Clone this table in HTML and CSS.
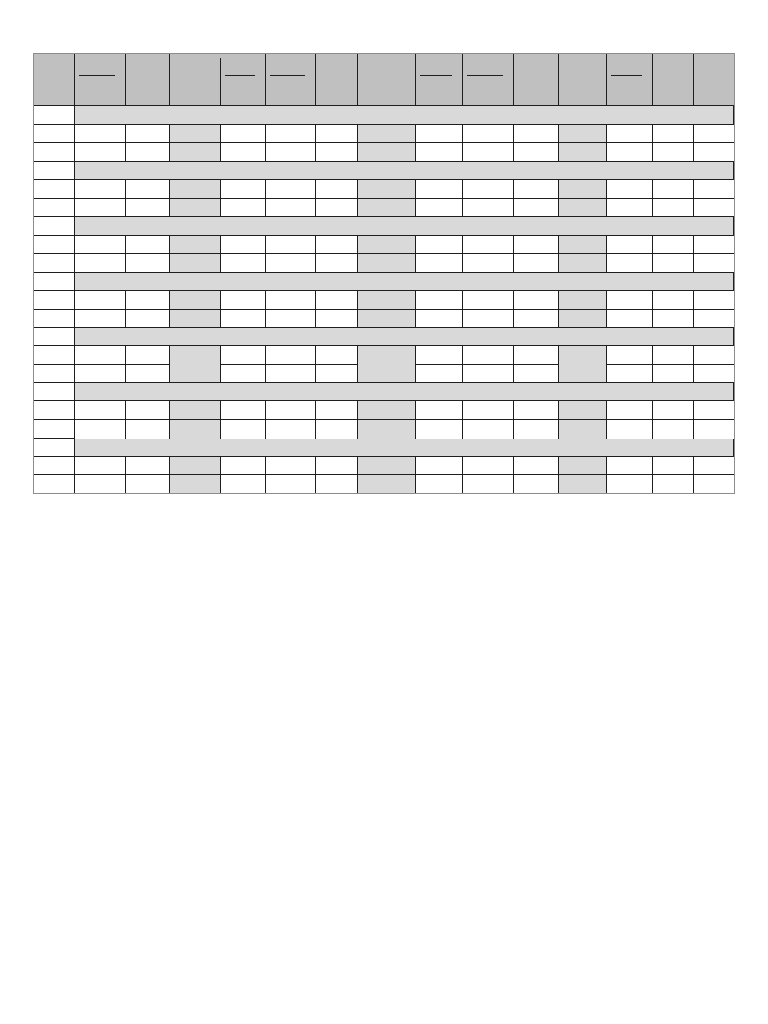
FILE: index.html
```html
<!DOCTYPE html>
<html lang="en">
<head>
<meta charset="utf-8">
<title>Sheet</title>
<link rel="stylesheet" href="styles.css">
</head>
<body>
<div class="page">
  <div class="sheet">
    <!-- header -->
    <div class="c hd"></div>
    <div class="c hd"><div class="dash"></div></div>
    <div class="c hd"></div>
    <div class="c hd partial"></div>
    <div class="c hd"><div class="dash"></div></div>
    <div class="c hd"><div class="dash"></div></div>
    <div class="c hd"></div>
    <div class="c hd"></div>
    <div class="c hd"><div class="dash"></div></div>
    <div class="c hd"><div class="dash"></div></div>
    <div class="c hd"></div>
    <div class="c hd"></div>
    <div class="c hd"><div class="dash"></div></div>
    <div class="c hd"></div>
    <div class="c hd last"></div>

    <!-- group 1 -->
    <div class="c"></div><div class="c band"></div>
    <div class="c"></div><div class="c"></div><div class="c"></div><div class="c sh"></div><div class="c"></div><div class="c"></div><div class="c"></div><div class="c sh"></div><div class="c"></div><div class="c"></div><div class="c"></div><div class="c sh"></div><div class="c"></div><div class="c"></div><div class="c last"></div>
    <div class="c"></div><div class="c"></div><div class="c"></div><div class="c sh"></div><div class="c"></div><div class="c"></div><div class="c"></div><div class="c sh"></div><div class="c"></div><div class="c"></div><div class="c"></div><div class="c sh"></div><div class="c"></div><div class="c"></div><div class="c last"></div>

    <!-- group 2 -->
    <div class="c"></div><div class="c band"></div>
    <div class="c"></div><div class="c"></div><div class="c"></div><div class="c sh"></div><div class="c"></div><div class="c"></div><div class="c"></div><div class="c sh"></div><div class="c"></div><div class="c"></div><div class="c"></div><div class="c sh"></div><div class="c"></div><div class="c"></div><div class="c last"></div>
    <div class="c"></div><div class="c"></div><div class="c"></div><div class="c sh"></div><div class="c"></div><div class="c"></div><div class="c"></div><div class="c sh"></div><div class="c"></div><div class="c"></div><div class="c"></div><div class="c sh"></div><div class="c"></div><div class="c"></div><div class="c last"></div>

    <!-- group 3 -->
    <div class="c"></div><div class="c band"></div>
    <div class="c"></div><div class="c"></div><div class="c"></div><div class="c sh"></div><div class="c"></div><div class="c"></div><div class="c"></div><div class="c sh"></div><div class="c"></div><div class="c"></div><div class="c"></div><div class="c sh"></div><div class="c"></div><div class="c"></div><div class="c last"></div>
    <div class="c"></div><div class="c"></div><div class="c"></div><div class="c sh"></div><div class="c"></div><div class="c"></div><div class="c"></div><div class="c sh"></div><div class="c"></div><div class="c"></div><div class="c"></div><div class="c sh"></div><div class="c"></div><div class="c"></div><div class="c last"></div>

    <!-- group 4 -->
    <div class="c"></div><div class="c band"></div>
    <div class="c"></div><div class="c"></div><div class="c"></div><div class="c sh"></div><div class="c"></div><div class="c"></div><div class="c"></div><div class="c sh"></div><div class="c"></div><div class="c"></div><div class="c"></div><div class="c sh"></div><div class="c"></div><div class="c"></div><div class="c last"></div>
    <div class="c"></div><div class="c"></div><div class="c"></div><div class="c sh"></div><div class="c"></div><div class="c"></div><div class="c"></div><div class="c sh"></div><div class="c"></div><div class="c"></div><div class="c"></div><div class="c sh"></div><div class="c"></div><div class="c"></div><div class="c last"></div>

    <!-- group 5 (merged shaded cells) -->
    <div class="c"></div><div class="c band"></div>
    <div class="c"></div><div class="c"></div><div class="c"></div><div class="c sh span2"></div><div class="c"></div><div class="c"></div><div class="c"></div><div class="c sh span2"></div><div class="c"></div><div class="c"></div><div class="c"></div><div class="c sh span2"></div><div class="c"></div><div class="c"></div><div class="c last"></div>
    <div class="c"></div><div class="c"></div><div class="c"></div><div class="c"></div><div class="c"></div><div class="c"></div><div class="c"></div><div class="c"></div><div class="c"></div><div class="c"></div><div class="c"></div><div class="c last"></div>

    <!-- group 6 -->
    <div class="c"></div><div class="c band"></div>
    <div class="c"></div><div class="c"></div><div class="c"></div><div class="c sh"></div><div class="c"></div><div class="c"></div><div class="c"></div><div class="c sh"></div><div class="c"></div><div class="c"></div><div class="c"></div><div class="c sh"></div><div class="c"></div><div class="c"></div><div class="c last"></div>
    <div class="c"></div><div class="c nob"></div><div class="c nob"></div><div class="c sh nob"></div><div class="c nob"></div><div class="c nob"></div><div class="c nob"></div><div class="c sh nob"></div><div class="c nob"></div><div class="c nob"></div><div class="c nob"></div><div class="c sh nob"></div><div class="c nob"></div><div class="c nob"></div><div class="c last nob"></div>

    <!-- group 7 -->
    <div class="c"></div><div class="c band"></div>
    <div class="c"></div><div class="c"></div><div class="c"></div><div class="c sh"></div><div class="c"></div><div class="c"></div><div class="c"></div><div class="c sh"></div><div class="c"></div><div class="c"></div><div class="c"></div><div class="c sh"></div><div class="c"></div><div class="c"></div><div class="c last"></div>
    <div class="c end"></div><div class="c end"></div><div class="c end"></div><div class="c sh end"></div><div class="c end"></div><div class="c end"></div><div class="c end"></div><div class="c sh end"></div><div class="c end"></div><div class="c end"></div><div class="c end"></div><div class="c sh end"></div><div class="c end"></div><div class="c end"></div><div class="c last end"></div>
  </div>
</div>
</body>
</html>
```

FILE: styles.css
```css
html, body {
  margin: 0;
  padding: 0;
  background: #ffffff;
  font-family: "Liberation Sans", Arial, sans-serif;
}

.page {
  padding: 53px 0 0 33px;
}

.sheet {
  display: grid;
  width: max-content;
  grid-template-columns: 41px 51px 44px 51px 45px 50px 42px 58px 47px 51px 45px 48px 46px 41px 40px;
  grid-template-rows: 52px 19px 18px 19px 18px 19px 18px 19px 18px 19px 18px 19px 18px 18px 19px 18px 18px 19px 19px 18px 18px 18px;
  border: 1px solid #8c8c8c;
  background: #ffffff;
}

.c {
  box-sizing: border-box;
  border-right: 1px solid #1e1e1e;
  border-bottom: 1px solid #1e1e1e;
  background: #ffffff;
  min-width: 0;
}

.hd {
  background: #c0c0c0;
}

.partial {
  border-right: none;
  background:
    linear-gradient(#1e1e1e, #1e1e1e) right bottom / 1px calc(100% - 4px) no-repeat,
    #c0c0c0;
}

.dash {
  margin: 21px 10px 0 4px;
  border-top: 1px solid #1e1e1e;
}

.band {
  grid-column: span 14;
  background: #d9d9d9;
}

.sh {
  background: #d9d9d9;
}

.span2 {
  grid-row: span 2;
}

.nob {
  border-bottom: none;
}

.last {
  border-right: none;
}

.end {
  border-bottom: none;
}
```
